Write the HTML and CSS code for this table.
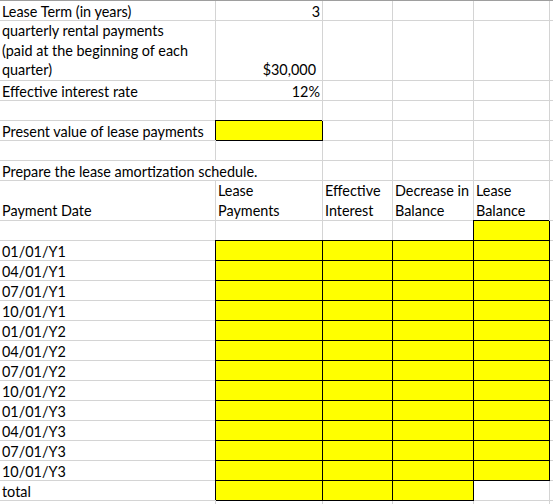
FILE: index.html
```html
<!DOCTYPE html>
<html lang="en">
<head>
    <meta charset="UTF-8">
    <meta name="viewport" content="width=device-width, initial-scale=1.0">
    <title>Lease Amortization</title>
    <link rel="stylesheet" href="styles.css">
</head>
<body>
    <table class="sheet">
        <colgroup>
            <col class="col-a"><col class="col-b"><col class="col-c"><col class="col-d"><col class="col-e"><col class="col-f">
        </colgroup>
        <tr><td>Lease Term (in years)</td><td class="num">3</td><td></td><td></td><td></td><td></td></tr>
        <tr class="tall"><td>quarterly rental payments<br>(paid at the beginning of each<br>quarter)</td><td class="num money">$30,000</td><td></td><td></td><td></td><td></td></tr>
        <tr><td>Effective interest rate</td><td class="num">12%</td><td></td><td></td><td></td><td></td></tr>
        <tr><td></td><td></td><td></td><td></td><td></td><td></td></tr>
        <tr><td>Present value of lease payments</td><td class="input"></td><td></td><td></td><td></td><td></td></tr>
        <tr><td></td><td></td><td></td><td></td><td></td><td></td></tr>
        <tr><td colspan="2">Prepare the lease amortization schedule.</td><td></td><td></td><td></td><td></td></tr>
        <tr class="head"><td>Payment Date</td><td>Lease<br>Payments</td><td>Effective<br>Interest</td><td>Decrease in<br>Balance</td><td>Lease<br>Balance</td><td></td></tr>
        <tr><td></td><td></td><td></td><td></td><td class="input"></td><td></td></tr>
        <tr><td>01/01/Y1</td><td class="input"></td><td class="input"></td><td class="input"></td><td class="input"></td><td></td></tr>
        <tr><td>04/01/Y1</td><td class="input"></td><td class="input"></td><td class="input"></td><td class="input"></td><td></td></tr>
        <tr><td>07/01/Y1</td><td class="input"></td><td class="input"></td><td class="input"></td><td class="input"></td><td></td></tr>
        <tr><td>10/01/Y1</td><td class="input"></td><td class="input"></td><td class="input"></td><td class="input"></td><td></td></tr>
        <tr><td>01/01/Y2</td><td class="input"></td><td class="input"></td><td class="input"></td><td class="input"></td><td></td></tr>
        <tr><td>04/01/Y2</td><td class="input"></td><td class="input"></td><td class="input"></td><td class="input"></td><td></td></tr>
        <tr><td>07/01/Y2</td><td class="input"></td><td class="input"></td><td class="input"></td><td class="input"></td><td></td></tr>
        <tr><td>10/01/Y2</td><td class="input"></td><td class="input"></td><td class="input"></td><td class="input"></td><td></td></tr>
        <tr><td>01/01/Y3</td><td class="input"></td><td class="input"></td><td class="input"></td><td class="input"></td><td></td></tr>
        <tr><td>04/01/Y3</td><td class="input"></td><td class="input"></td><td class="input"></td><td class="input"></td><td></td></tr>
        <tr><td>07/01/Y3</td><td class="input"></td><td class="input"></td><td class="input"></td><td class="input"></td><td></td></tr>
        <tr><td>10/01/Y3</td><td class="input"></td><td class="input"></td><td class="input"></td><td class="input"></td><td></td></tr>
        <tr><td>total</td><td class="input"></td><td class="input"></td><td class="input"></td><td></td><td></td></tr>
        <tr><td></td><td></td><td></td><td></td><td></td><td></td></tr>
    </table>
</body>
</html>
```

FILE: styles.css
```css
* {
    margin: 0;
    padding: 0;
    box-sizing: border-box;
}

body {
    background: #fff;
    color: #000;
    font-family: Lato, "Liberation Sans", sans-serif;
    font-size: 14.4px;
    overflow: hidden;
}

.sheet {
    border-collapse: separate;
    border-spacing: 0;
    table-layout: fixed;
    width: 560px;
    border-top: 1px solid #9e9e9e;
}

.col-a { width: 216px; }
.col-b { width: 107px; }
.col-c { width: 70px; }
.col-d { width: 81px; }
.col-e { width: 76px; }
.col-f { width: 10px; }

.sheet td {
    height: 20px;
    padding: 0 2px;
    border-right: 1px solid #d4d4d4;
    border-bottom: 1px solid #d4d4d4;
    vertical-align: bottom;
    white-space: nowrap;
    line-height: 17px;
}

.sheet .tall td {
    height: 60px;
    line-height: 19.6px;
}

.sheet .head td {
    height: 40px;
    line-height: 19.5px;
}

.sheet td.num {
    text-align: right;
}

.sheet td.money {
    padding-right: 6px;
}

/* yellow answer cells, black box on all four sides */
.sheet td.input {
    background: #ffff00;
    border-right-color: #000;
    border-bottom-color: #000;
    box-shadow: -1px -1px 0 #000;
}
```
